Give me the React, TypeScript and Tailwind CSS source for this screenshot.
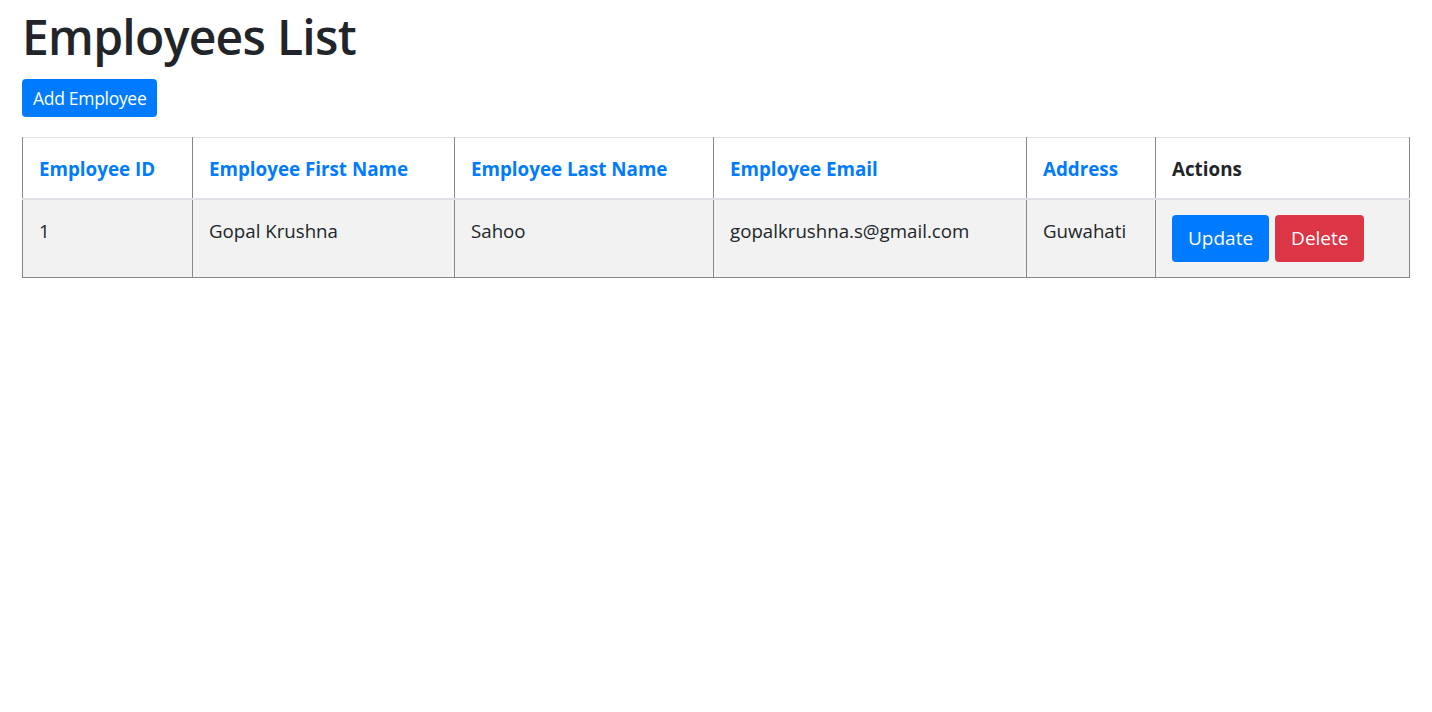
const columns = [
  { label: "Employee ID", width: "w-[170px]" },
  { label: "Employee First Name", width: "w-[262px]" },
  { label: "Employee Last Name", width: "w-[259px]" },
  { label: "Employee Email", width: "w-[313px]" },
  { label: "Address", width: "w-[129px]" },
];

const employees = [
  {
    id: 1,
    firstName: "Gopal Krushna",
    lastName: "Sahoo",
    email: "gopalkrushna.s@gmail.com",
    address: "Guwahati",
  },
];

export default function App() {
  return (
    <div className="min-h-screen bg-white px-[22px] font-['Open_Sans',sans-serif] text-[#212529]">
      <h1 className="pt-[9px] text-[48px] leading-[56px] font-semibold tracking-[-0.7px]">
        Employees List
      </h1>

      <button className="mt-[14px] rounded-[4px] bg-[#007bff] px-[11px] py-[6px] text-[17.5px] leading-[26px] tracking-[-0.3px] text-white">
        Add Employee
      </button>

      <table className="mt-[20px] w-[1388px] table-fixed border-collapse text-[18.7px] leading-[29px]">
        <thead>
          <tr className="border-t border-[#dee2e6]">
            {columns.map((col) => (
              <th
                key={col.label}
                className={`${col.width} border-x border-[#888] border-b-2 border-b-[#dee2e6] px-4 pt-[17px] pb-[14px] text-left text-[18.8px] font-bold text-[#007bff]`}
              >
                {col.label}
              </th>
            ))}
            <th className="border-x border-[#888] border-b-2 border-b-[#dee2e6] px-4 pt-[17px] pb-[14px] text-left text-[18.8px] font-bold text-[#212529]">
              Actions
            </th>
          </tr>
        </thead>
        <tbody>
          {employees.map((emp) => (
            <tr key={emp.id} className="border-b border-[#888] bg-[#f2f2f2] align-top">
              <td className="border-x border-[#888] px-4 pt-4 pb-[15px]">{emp.id}</td>
              <td className="border-x border-[#888] px-4 pt-4 pb-[15px]">{emp.firstName}</td>
              <td className="border-x border-[#888] px-4 pt-4 pb-[15px]">{emp.lastName}</td>
              <td className="border-x border-[#888] px-4 pt-4 pb-[15px]">{emp.email}</td>
              <td className="border-x border-[#888] px-4 pt-4 pb-[15px]">{emp.address}</td>
              <td className="border-x border-[#888] px-4 pt-[15px] pb-[15px]">
                <div className="flex gap-[6px]">
                  <button className="rounded-[4px] bg-[#007bff] px-4 py-[8px] text-[19px] leading-[31px] text-white">
                    Update
                  </button>
                  <button className="rounded-[4px] bg-[#dc3545] px-4 py-[8px] text-[19px] leading-[31px] text-white">
                    Delete
                  </button>
                </div>
              </td>
            </tr>
          ))}
        </tbody>
      </table>
    </div>
  );
}
